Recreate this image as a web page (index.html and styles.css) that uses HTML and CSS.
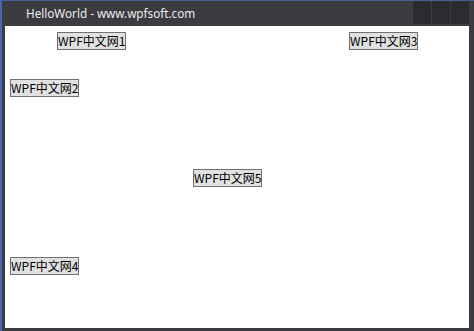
FILE: index.html
```html
<!DOCTYPE html>
<html lang="zh-CN">
<head>
<meta charset="utf-8">
<title>HelloWorld</title>
<link rel="stylesheet" href="styles.css">
</head>
<body>
<div class="window">
  <div class="titlebar">
    <span class="title">HelloWorld - www.wpfsoft.com</span>
    <div class="caption-buttons">
      <span class="cap-btn"></span>
      <span class="cap-btn"></span>
      <span class="cap-btn"></span>
    </div>
  </div>
  <div class="client">
    <button class="btn b1">WPF中文网1</button>
    <button class="btn b2">WPF中文网2</button>
    <button class="btn b3">WPF中文网3</button>
    <button class="btn b4">WPF中文网4</button>
    <button class="btn b5">WPF中文网5</button>
  </div>
</div>
</body>
</html>
```
FILE: styles.css
```css
html, body {
  margin: 0;
  padding: 0;
  width: 474px;
  height: 331px;
  overflow: hidden;
  background: #3a3a3f;
}
.window {
  width: 472px;
  height: 330px;
  border-left: 2px solid #4a68a8;
  border-top: 1px solid #4a5f98;
  background: #3b3b40;
  display: flex;
  flex-direction: column;
}
.titlebar {
  height: 25px;
  display: flex;
  align-items: flex-start;
  justify-content: space-between;
  padding-right: 5px;
}
.title {
  margin-left: 24px;
  margin-top: 4px;
  color: #ececec;
  font-family: "Noto Sans", "Open Sans", sans-serif;
  font-size: 11.7px;
  line-height: 16px;
  white-space: nowrap;
}
.caption-buttons {
  display: flex;
  gap: 1px;
}
.cap-btn {
  width: 18px;
  height: 23px;
  background: #2c2c30;
}
.client {
  position: relative;
  margin-left: 3px;
  width: 464px;
  height: 302px;
  background: #ffffff;
}
.btn {
  position: absolute;
  box-sizing: border-box;
  width: 69px;
  height: 18px;
  margin: 0;
  padding: 0;
  background: #e1e1e1;
  border: 1px solid #707070;
  color: #000;
  font-family: "Noto Sans CJK SC", "Noto Sans", sans-serif;
  font-size: 12px;
  line-height: 16px;
  white-space: nowrap;
  text-align: center;
}
.b1 { left: 52px; top: 6px; }
.b2 { left: 5px; top: 53px; }
.b3 { left: 344px; top: 6px; }
.b4 { left: 5px; top: 231px; }
.b5 { left: 188px; top: 143px; }
```
